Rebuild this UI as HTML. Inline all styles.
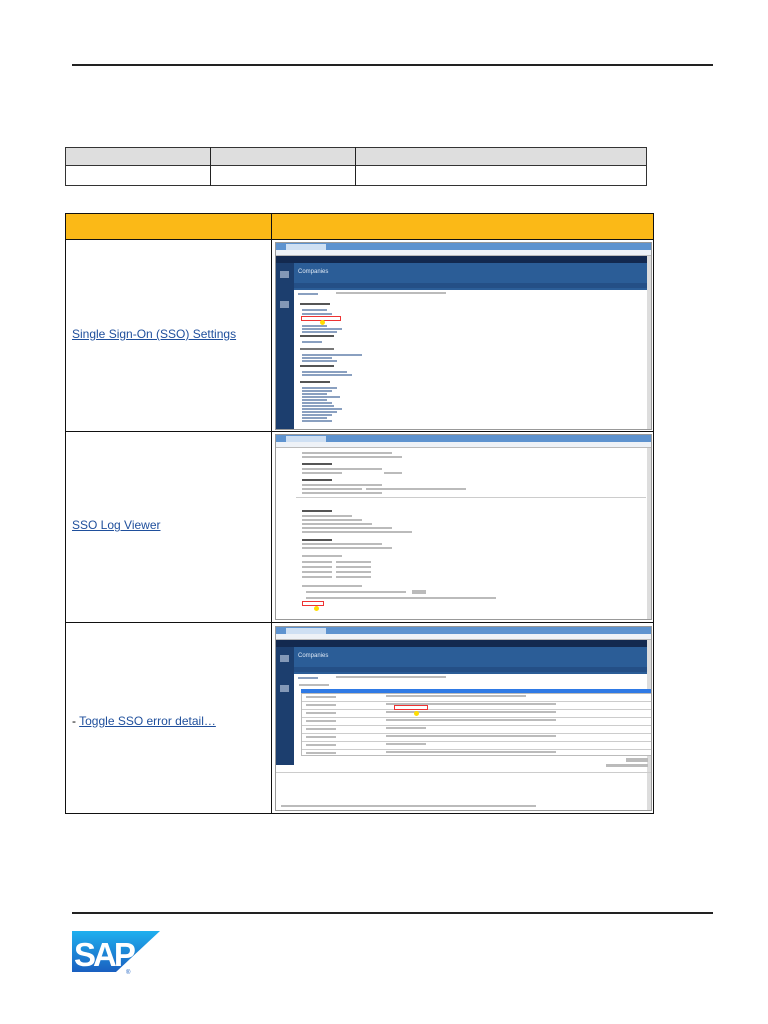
<!DOCTYPE html>
<html><head><meta charset="utf-8"><style>
*{margin:0;padding:0;box-sizing:border-box}
body{width:768px;height:1024px;background:#fff;position:relative;font-family:"Liberation Sans",sans-serif;overflow:hidden}
.a{position:absolute}
.hl{position:absolute;height:2px;background:#222}
a{color:#1f4f9c;text-decoration:underline;font-size:12px}
.shot{position:absolute;background:#fff;overflow:hidden;border:1px solid #999}
.tb{position:absolute;left:0;right:0;top:0;height:7px;background:#5e93cf}
.tab{position:absolute;left:10px;top:1px;width:40px;height:6px;background:#cfe0f3}
.ad{position:absolute;left:0;right:0;top:7px;height:6px;background:#eef2f7;border-bottom:1px solid #bbb}
.nv{position:absolute;left:0;right:0;top:13px;height:7px;background:#13294f}
.hd{position:absolute;left:0;right:0;top:20px;height:27px;background:#2b5d97}
.hd span{position:absolute;left:22px;top:6px;color:#dfe9f5;font-size:6px}
.nav{position:absolute;left:18px;right:4px;top:40px;height:5px;background:#244f86}
.sb{position:absolute;left:0;top:20px;width:18px;bottom:0;background:#1c3e6e}
.sb i{position:absolute;left:4px;width:9px;height:7px;background:#c8d5e8;opacity:.6}
.ln{position:absolute;height:2px;background:#8aa0c0}
.gl{position:absolute;height:2px;background:#bbb}
.sc{position:absolute;right:0;top:13px;width:4px;bottom:0;background:#ddd}
</style></head><body>
<div class="hl" style="left:72px;top:64px;width:641px"></div>

<div class="a" style="left:65px;top:147px;width:582px;height:39px;border:1px solid #333"></div>
<div class="a" style="left:66px;top:148px;width:580px;height:18px;background:#dedede;border-bottom:1px solid #333"></div>
<div class="a" style="left:210px;top:147px;width:1px;height:39px;background:#222"></div>
<div class="a" style="left:355px;top:147px;width:1px;height:39px;background:#222"></div>

<div class="a" style="left:65px;top:213px;width:589px;height:601px;border:1px solid #111"></div>
<div class="a" style="left:66px;top:214px;width:587px;height:26px;background:#fbb917;border-bottom:1px solid #111"></div>
<div class="a" style="left:271px;top:213px;width:1px;height:601px;background:#111"></div>
<div class="a" style="left:66px;top:431px;width:587px;height:1px;background:#111"></div>
<div class="a" style="left:66px;top:622px;width:587px;height:1px;background:#111"></div>

<div class="a" style="left:72px;top:325px"><a>Single Sign-On (SSO) Settings</a></div>
<div class="a" style="left:72px;top:516px"><a>SSO Log Viewer</a></div>
<div class="a" style="left:72px;top:714px;font-size:12px">- <a>Toggle SSO error detail…</a></div>

<div class="shot" style="left:275px;top:242px;width:377px;height:188px">
<div class="tb"><div class="tab"></div></div><div class="ad"></div><div class="nv"></div>
<div class="hd"><span>Companies</span></div><div class="nav"></div>
<div class="sb"><i style="top:8px"></i><i style="top:38px"></i></div><div class="sc"></div>
<div class="ln" style="left:22px;top:50px;width:20px"></div><div class="gl" style="left:60px;top:49px;width:110px"></div>
<div class="ln" style="left:24px;top:60px;width:30px;background:#555"></div>
<div class="ln" style="left:26px;top:66px;width:25px"></div><div class="ln" style="left:26px;top:70px;width:30px"></div>
<div class="a" style="left:25px;top:73px;width:40px;height:5px;border:1px solid #e33"></div>
<div class="a" style="left:44px;top:77px;width:5px;height:5px;border-radius:50%;background:#fd0"></div>
<div class="ln" style="left:26px;top:82px;width:25px"></div><div class="ln" style="left:26px;top:85px;width:40px"></div><div class="ln" style="left:26px;top:88px;width:35px"></div>
<div class="ln" style="left:24px;top:92px;width:34px;background:#555"></div><div class="ln" style="left:26px;top:98px;width:20px"></div>
<div class="ln" style="left:24px;top:105px;width:34px;background:#777"></div><div class="ln" style="left:26px;top:111px;width:60px"></div><div class="ln" style="left:26px;top:114px;width:30px"></div><div class="ln" style="left:26px;top:117px;width:35px"></div>
<div class="ln" style="left:24px;top:122px;width:34px;background:#555"></div><div class="ln" style="left:26px;top:128px;width:45px"></div><div class="ln" style="left:26px;top:131px;width:50px"></div>
<div class="ln" style="left:24px;top:138px;width:30px;background:#555"></div>
<div class="ln" style="left:26px;top:144px;width:35px"></div><div class="ln" style="left:26px;top:147px;width:30px"></div><div class="ln" style="left:26px;top:150px;width:25px"></div><div class="ln" style="left:26px;top:153px;width:38px"></div><div class="ln" style="left:26px;top:156px;width:25px"></div><div class="ln" style="left:26px;top:159px;width:30px"></div><div class="ln" style="left:26px;top:162px;width:32px"></div><div class="ln" style="left:26px;top:165px;width:40px"></div><div class="ln" style="left:26px;top:168px;width:35px"></div><div class="ln" style="left:26px;top:171px;width:30px"></div><div class="ln" style="left:26px;top:174px;width:25px"></div><div class="ln" style="left:26px;top:177px;width:30px"></div>
</div>

<div class="shot" style="left:275px;top:434px;width:377px;height:186px">
<div class="tb"><div class="tab"></div></div><div class="ad"></div><div class="sc"></div>
<div class="gl" style="left:26px;top:17px;width:90px"></div><div class="gl" style="left:26px;top:21px;width:100px"></div>
<div class="ln" style="left:26px;top:28px;width:30px;background:#555"></div><div class="gl" style="left:26px;top:33px;width:80px"></div><div class="gl" style="left:26px;top:37px;width:40px"></div><div class="gl" style="left:108px;top:37px;width:18px"></div>
<div class="ln" style="left:26px;top:44px;width:30px;background:#555"></div><div class="gl" style="left:26px;top:49px;width:80px"></div><div class="gl" style="left:26px;top:53px;width:60px"></div><div class="gl" style="left:90px;top:53px;width:100px"></div><div class="gl" style="left:26px;top:57px;width:80px"></div>
<div class="a" style="left:20px;top:62px;width:350px;height:1px;background:#ccc"></div>
<div class="ln" style="left:26px;top:75px;width:30px;background:#555"></div><div class="gl" style="left:26px;top:80px;width:50px"></div><div class="gl" style="left:26px;top:84px;width:60px"></div><div class="gl" style="left:26px;top:88px;width:70px"></div><div class="gl" style="left:26px;top:92px;width:90px"></div><div class="gl" style="left:26px;top:96px;width:110px"></div>
<div class="ln" style="left:26px;top:104px;width:30px;background:#555"></div><div class="gl" style="left:26px;top:108px;width:80px"></div><div class="gl" style="left:26px;top:112px;width:90px"></div>
<div class="gl" style="left:26px;top:120px;width:40px"></div><div class="gl" style="left:26px;top:126px;width:30px"></div><div class="gl" style="left:60px;top:126px;width:35px"></div><div class="gl" style="left:26px;top:131px;width:30px"></div><div class="gl" style="left:60px;top:131px;width:35px"></div><div class="gl" style="left:26px;top:136px;width:30px"></div><div class="gl" style="left:60px;top:136px;width:35px"></div><div class="gl" style="left:26px;top:141px;width:30px"></div><div class="gl" style="left:60px;top:141px;width:35px"></div>
<div class="gl" style="left:26px;top:150px;width:60px"></div><div class="gl" style="left:30px;top:156px;width:100px"></div><div class="gl" style="left:136px;top:155px;width:14px;height:4px"></div><div class="gl" style="left:30px;top:162px;width:190px"></div>
<div class="a" style="left:26px;top:166px;width:22px;height:5px;border:1px solid #e33"></div>
<div class="a" style="left:38px;top:171px;width:5px;height:5px;border-radius:50%;background:#fd0"></div>
</div>

<div class="shot" style="left:275px;top:626px;width:377px;height:185px">
<div class="tb"><div class="tab"></div></div><div class="ad"></div><div class="nv"></div>
<div class="hd"><span>Companies</span></div><div class="nav"></div>
<div class="sb" style="bottom:45px"><i style="top:8px"></i><i style="top:38px"></i></div><div class="sc"></div>
<div class="ln" style="left:22px;top:50px;width:20px"></div><div class="gl" style="left:60px;top:49px;width:110px"></div>
<div class="gl" style="left:23px;top:57px;width:30px"></div>
<div class="a" style="left:25px;top:62px;width:353px;height:4px;background:#2f7ae5"></div>
<div class="a" style="left:25px;top:66px;width:353px;height:63px;border:1px solid #bbb;background:repeating-linear-gradient(#fff 0 7px,#ccc 7px 8px)"></div>
<div class="gl" style="left:30px;top:69px;width:30px"></div><div class="gl" style="left:30px;top:77px;width:30px"></div><div class="gl" style="left:30px;top:85px;width:30px"></div><div class="gl" style="left:30px;top:93px;width:30px"></div><div class="gl" style="left:30px;top:101px;width:30px"></div><div class="gl" style="left:30px;top:109px;width:30px"></div><div class="gl" style="left:30px;top:117px;width:30px"></div><div class="gl" style="left:30px;top:125px;width:30px"></div>
<div class="gl" style="left:110px;top:68px;width:140px"></div><div class="gl" style="left:110px;top:76px;width:170px"></div><div class="gl" style="left:110px;top:84px;width:170px"></div><div class="gl" style="left:110px;top:92px;width:170px"></div><div class="gl" style="left:110px;top:100px;width:40px"></div><div class="gl" style="left:110px;top:108px;width:170px"></div><div class="gl" style="left:110px;top:116px;width:40px"></div><div class="gl" style="left:110px;top:124px;width:170px"></div>
<div class="a" style="left:118px;top:78px;width:34px;height:5px;border:1px solid #e33"></div>
<div class="a" style="left:138px;top:84px;width:5px;height:5px;border-radius:50%;background:#fd0"></div>
<div class="gl" style="left:350px;top:131px;width:22px;height:4px"></div><div class="gl" style="left:330px;top:137px;width:42px;height:3px"></div>
<div class="a" style="left:0;top:145px;width:377px;height:1px;background:#ccc"></div>
<div class="gl" style="left:5px;top:178px;width:255px;height:2px"></div>
</div>

<div class="hl" style="left:72px;top:912px;width:641px"></div>
<svg class="a" style="left:72px;top:929px" width="90" height="46" viewBox="0 0 90 46">
<defs><linearGradient id="g" x1="0" y1="0" x2="0" y2="1"><stop offset="0" stop-color="#1fb0ef"/><stop offset="1" stop-color="#1a5fc0"/></linearGradient></defs>
<polygon points="0,2 88,2 44,43 0,43" fill="url(#g)"/>
<text x="2" y="37" font-family="Liberation Sans" font-weight="bold" font-size="33" fill="#fff" letter-spacing="-3">SAP</text>
<text x="54" y="45" font-size="6" fill="#1a5fc0" font-family="Liberation Sans">®</text>
</svg>
</body></html>
